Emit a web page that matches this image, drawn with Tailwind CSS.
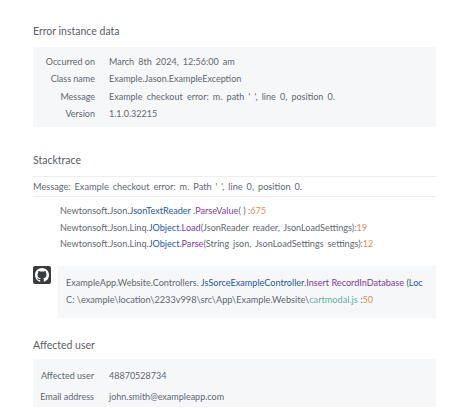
<!DOCTYPE html>
<html lang="en">
<head>
<meta charset="utf-8">
<script src="https://cdn.jsdelivr.net/npm/@tailwindcss/browser@4"></script>
</head>
<body class="bg-white">
<main class="w-[474px] h-[408px] overflow-hidden pl-[33px] pr-[38px] pt-[23px] font-['Lato',sans-serif] text-[9px] text-[#62686f]">
  <h2 class="text-[10.5px] leading-[16px] text-[#5a6067]">Error instance data</h2>
  <section class="mt-[8px] h-[80px] bg-[#f5f7f9] py-[6px] grid grid-cols-[62px_1fr] gap-x-[14px] auto-rows-[17.4px] items-center">
    <span class="text-right">Occurred on</span><span class="[word-spacing:1.8px]">March 8th 2024, 12:56:00 am</span>
    <span class="text-right">Class name</span><span>Example.Jason.ExampleException</span>
    <span class="text-right">Message</span><span class="[word-spacing:1.9px]">Example checkout error: m. path ' ', line 0, position 0.</span>
    <span class="text-right">Version</span><span>1.1.0.32215</span>
  </section>

  <h2 class="mt-[25px] text-[10.5px] leading-[16px] text-[#5a6067]">Stacktrace</h2>
  <div class="mt-[8px] h-[21px] border-y border-[#eceef0] flex items-center text-[9.2px] [word-spacing:1.6px]">Message: Example checkout error: m. Path ' ', line 0, position 0.</div>
  <div class="mt-[6px] pl-[27px] flex flex-col text-[9.1px] leading-[16.5px] whitespace-nowrap">
    <div>Newtonsoft.Json.<span class="text-[#1d5a9e]">JsonTextReader</span> <span class="text-[#7d3c98]">.ParseValue</span>( ) :<span class="text-[#dd9050]">675</span></div>
    <div class="[word-spacing:1.5px]">Newtonsoft.Json.Linq.<span class="text-[#1d5a9e]">JObject</span>.<span class="text-[#7d3c98]">Load</span>(JsonReader reader, JsonLoadSettings):<span class="text-[#dd9050]">19</span></div>
    <div class="[word-spacing:1.5px]">Newtonsoft.Json.Linq.<span class="text-[#1d5a9e]">JObject</span>.<span class="text-[#7d3c98]">Parse</span>(String json, JsonLoadSettings settings):<span class="text-[#dd9050]">12</span></div>
  </div>

  <div class="mt-[13px] flex items-start gap-[7px]">
    <div class="w-[18px] h-[18px] rounded-[2px] bg-[#3a3b3d] flex items-center justify-center shrink-0">
      <svg viewBox="0 0 16 16" class="w-[14px] h-[14px]" fill="#ffffff"><path d="M8 0C3.58 0 0 3.58 0 8c0 3.54 2.29 6.53 5.47 7.59.4.07.55-.17.55-.38 0-.19-.01-.82-.01-1.49-2.01.37-2.53-.49-2.69-.94-.09-.23-.48-.94-.82-1.13-.28-.15-.68-.52-.01-.53.63-.01 1.08.58 1.23.82.72 1.21 1.87.87 2.33.66.07-.52.28-.87.51-1.07-1.78-.2-3.64-.89-3.64-3.95 0-.87.31-1.59.82-2.15-.08-.2-.36-1.02.08-2.12 0 0 .67-.21 2.2.82.64-.18 1.32-.27 2-.27s1.36.09 2 .27c1.53-1.04 2.2-.82 2.2-.82.44 1.1.16 1.92.08 2.12.51.56.82 1.27.82 2.15 0 3.07-1.87 3.75-3.65 3.95.29.25.54.73.54 1.48 0 1.07-.01 1.93-.01 2.2 0 .21.15.46.55.38A8.01 8.01 0 0 0 16 8c0-4.42-3.58-8-8-8z"/></svg>
    </div>
    <div class="w-[378px] h-[52px] bg-[#f5f7f9] pl-[8px] pt-[8px] leading-[17.5px] whitespace-nowrap">
      <div class="text-[9.1px]">ExampleApp.Website.Controllers. <span class="text-[#1d5a9e]">JsSorceExampleController</span>.<span class="text-[#7d3c98]">Insert RecordInDatabase</span> <span class="text-[#1d5a9e]">(Loc</span></div>
      <div class="text-[9.2px]">C: \example\location\2233v998\src\App\Example.Website\<span class="text-[#5fb3a0]">cartmodal.js</span> :<span class="text-[#dd9050]">50</span></div>
    </div>
  </div>

  <h2 class="mt-[19px] text-[10.5px] leading-[16px] text-[#5a6067]">Affected user</h2>
  <section class="mt-[6px] h-[48px] bg-[#f5f7f9] pt-[7px] grid grid-cols-[61px_1fr] gap-x-[15px] auto-rows-[20.5px] items-center">
    <span class="text-right">Affected user</span><span>48870528734</span>
    <span class="text-right">Email address</span><span>john.smith@exampleapp.com</span>
  </section>
</main>
</body>
</html>
